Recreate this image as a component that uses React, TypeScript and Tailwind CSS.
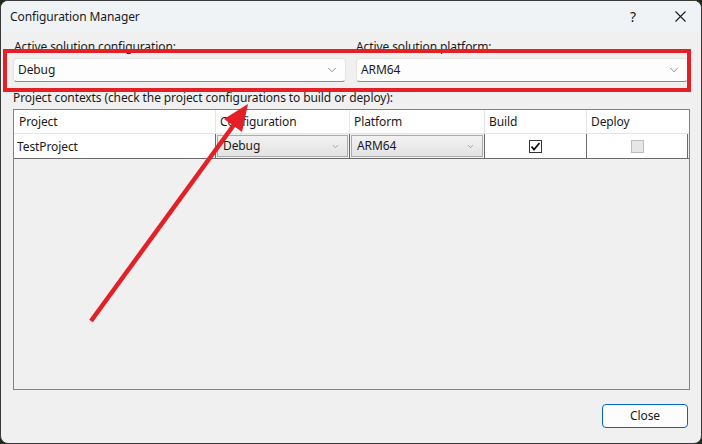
import React from 'react';
import { ChevronDown } from 'lucide-react';

const font = "font-['Segoe_UI','Noto_Sans',sans-serif] tracking-[-0.1px]";

interface ComboProps {
  value: string;
}

// Windows 11 style combo box used for the solution-wide settings
const Combo: React.FC<ComboProps> = ({ value }) => (
  <div className="h-[24px] flex items-center justify-between bg-[#fdfdfd] border border-[#e3e3e3] border-b-[#8a8a8a] rounded-[4px] pl-[4px] pr-[6px]">
    <span className="text-[12px] text-[#1b1b1b]">{value}</span>
    <ChevronDown size={14} strokeWidth={1.2} className="text-[#606060]" />
  </div>
);

// Classic combo box drawn inside a grid cell
const CellCombo: React.FC<ComboProps> = ({ value }) => (
  <div className="m-[1px] h-[22px] flex items-center justify-between bg-gradient-to-b from-[#f2f2f2] to-[#e3e3e3] border border-[#acacac] pl-[5px] pr-[7px]">
    <span className="text-[12px] text-[#1b1b1b]">{value}</span>
    <ChevronDown size={9} strokeWidth={1.5} className="text-[#707070]" />
  </div>
);

const columns = ['Project', 'Configuration', 'Platform', 'Build', 'Deploy'];

const App: React.FC = () => {
  return (
    <div className={`w-[702px] h-[444px] bg-[#1c2a19] relative overflow-hidden ${font}`}>
      <div className="w-full h-full rounded-[8px] border border-[#3a3a3a] bg-[#f0f0f0] overflow-hidden flex flex-col">
        {/* title bar */}
        <div className="h-[31px] shrink-0 bg-[#eff3f6] flex items-center pl-[9px] pr-[15px]">
          <span className="text-[12px] text-[#1a1a1a] flex-1">Configuration Manager</span>
          <span className="text-[14px] text-[#1a1a1a] mr-[39px]">?</span>
          <svg width="11" height="11" viewBox="0 0 11 11">
            <path d="M0.5 0.5 L10.5 10.5 M10.5 0.5 L0.5 10.5" stroke="#1a1a1a" strokeWidth="1.1" />
          </svg>
        </div>

        <div className="flex-1 flex flex-col px-[12px]">
          <div className="flex gap-[10px] mt-[7px]">
            <div className="w-[333px] flex flex-col gap-[3px]">
              <span className="text-[12px] leading-[16px] pl-[1px] text-[#1a1a1a]">Active solution configuration:</span>
              <Combo value="Debug" />
            </div>
            <div className="w-[332px] flex flex-col gap-[3px]">
              <span className="text-[12px] leading-[16px] text-[#1a1a1a]">Active solution platform:</span>
              <Combo value="ARM64" />
            </div>
          </div>

          <span className="text-[12px] leading-[16px] mt-[8px] text-[#1a1a1a]">
            Project contexts (check the project configurations to build or deploy):
          </span>

          {/* project grid */}
          <div className="w-[677px] h-[281px] mt-[3px] border border-[#828282] flex flex-col">
            <div className="grid grid-cols-[202px_134px_135px_102px_101px] h-[24px] bg-white border-b border-[#e5e5e5]">
              {columns.map((c, i) => (
                <div
                  key={c}
                  className={`flex items-center pt-[1px] text-[12px] text-[#1a1a1a] ${i === 0 ? 'pl-[5px]' : 'pl-[4px]'} ${i < 4 ? 'border-r border-[#e5e5e5]' : ''}`}
                >
                  {c}
                </div>
              ))}
            </div>
            <div className="grid grid-cols-[202px_134px_135px_102px_101px] h-[25px] border-b border-[#6b6b6b]">
              <div className="bg-white flex items-center pl-[3px] pt-[1px] text-[12px] text-[#1a1a1a] border-r border-[#6b6b6b]">
                TestProject
              </div>
              <div className="border-r border-[#6b6b6b]">
                <CellCombo value="Debug" />
              </div>
              <div className="border-r border-[#6b6b6b]">
                <CellCombo value="ARM64" />
              </div>
              <div className="bg-white flex items-center justify-center border-r border-[#6b6b6b]">
                <div className="w-[13px] h-[13px] border border-[#333333] bg-white flex items-center justify-center">
                  <svg width="11" height="11" viewBox="0 0 11 11">
                    <path d="M1.5 5.5 L4 8.5 L9.5 2" fill="none" stroke="#111" strokeWidth="1.8" />
                  </svg>
                </div>
              </div>
              <div className="bg-white flex items-center justify-center border-r border-[#6b6b6b]">
                <div className="w-[13px] h-[13px] border border-[#bcbcbc] bg-[#e6e6e6]" />
              </div>
            </div>
          </div>

          <div className="flex justify-end mt-[14px] pr-[1px]">
            <button className="w-[86px] h-[24px] bg-[#fdfdfd] border border-[#0067c0] rounded-[4px] text-[12px] text-[#1a1a1a]">
              Close
            </button>
          </div>
        </div>
      </div>

      {/* red annotation box and arrow */}
      <div className="absolute left-[3px] top-[49px] w-[688px] h-[43px] border-4 border-[#e41f26]" />
      <svg className="absolute left-0 top-0" width="702" height="444" viewBox="0 0 702 444">
        <line x1="91" y1="321" x2="236" y2="122" stroke="#e41f26" strokeWidth="4.5" />
        <polygon points="248,104 242,132 224,119" fill="#e41f26" />
      </svg>
    </div>
  );
};

export default App;
